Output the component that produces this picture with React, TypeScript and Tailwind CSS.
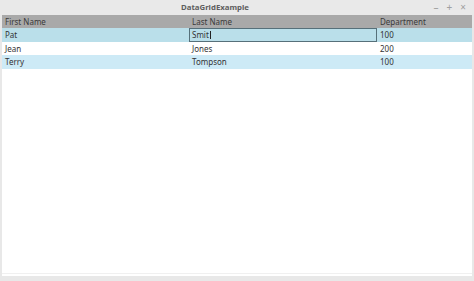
export default function App() {
  const rows = [
    { first: "Pat", last: "Smit", dept: "100", bg: "bg-[#badfea]", h: "h-[14px]", editing: true },
    { first: "Jean", last: "Jones", dept: "200", bg: "bg-white", h: "h-[13px]" },
    { first: "Terry", last: "Tompson", dept: "100", bg: "bg-[#cdeaf6]", h: "h-[14px]" },
  ];

  return (
    <div className="flex h-[281px] w-[474px] flex-col bg-[#e8e8e8] font-['Noto_Sans',sans-serif] text-[8px] leading-none text-[#333]">
      {/* title bar */}
      <div className="relative flex h-[15px] items-center justify-center bg-[#e9e9e9] pr-[44px]">
        <span className="text-[7.8px] font-bold text-[#5e5e5e]">DataGridExample</span>
        <div className="absolute right-[8px] top-[2px] flex items-center gap-[8px] text-[10px] text-[#a0a0a0]">
          <span>–</span>
          <span>+</span>
          <span>×</span>
        </div>
      </div>

      {/* grid */}
      <div className="mx-[2px] flex flex-1 flex-col bg-white">
        <div className="flex h-[13px] items-center bg-[#a9a9a9] text-[#3a3a3a]">
          <div className="w-[187px] pl-[3px]">First Name</div>
          <div className="w-[188px] pl-[3px]">Last Name</div>
          <div className="flex-1 pl-[3px]">Department</div>
        </div>
        {rows.map((r) => (
          <div key={r.first} className={`flex items-center ${r.h} ${r.bg}`}>
            <div className="w-[187px] pl-[3px]">{r.first}</div>
            {r.editing ? (
              <div className="flex h-full w-[188px] items-center border border-[#56707a] pl-[2px]">
                {r.last}
                <span className="ml-[1px] inline-block h-[8px] w-px bg-[#222]" />
              </div>
            ) : (
              <div className="w-[188px] pl-[3px]">{r.last}</div>
            )}
            <div className="flex-1 pl-[3px]">{r.dept}</div>
          </div>
        ))}
        <div className="flex-1" />
        <div className="h-[3px] border-t border-[#f0f0f0]" />
      </div>
      <div className="h-[5px] bg-[#e8e8e8]" />
    </div>
  );
}
